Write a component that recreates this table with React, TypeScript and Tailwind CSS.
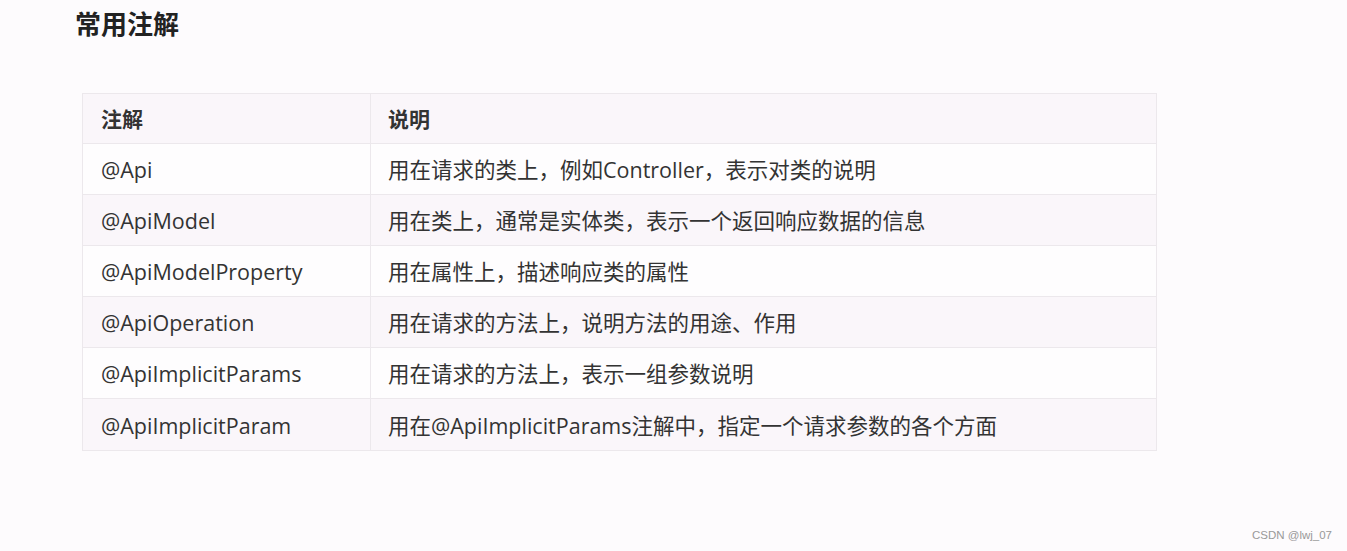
import React from "react";

const rows: [string, string][] = [
  ["@Api", "用在请求的类上，例如Controller，表示对类的说明"],
  ["@ApiModel", "用在类上，通常是实体类，表示一个返回响应数据的信息"],
  ["@ApiModelProperty", "用在属性上，描述响应类的属性"],
  ["@ApiOperation", "用在请求的方法上，说明方法的用途、作用"],
  ["@ApiImplicitParams", "用在请求的方法上，表示一组参数说明"],
  ["@ApiImplicitParam", "用在@ApiImplicitParams注解中，指定一个请求参数的各个方面"],
];

export default function App() {
  return (
    <div
      className="relative w-[1347px] h-[551px] bg-[#fdfbfd] overflow-hidden text-[#333]"
      style={{ fontFamily: '"Open Sans", "Noto Sans CJK SC", sans-serif' }}
    >
      <div className="pl-[75px] pt-[6px]">
        <h1 className="text-[26px] leading-[36px] font-bold text-[#222]">常用注解</h1>
      </div>
      <div className="ml-[82px] mt-[51px] w-[1075px] border border-[#ece8ec]">
        <div className="flex h-[50px] bg-[#faf6fa] border-b border-[#ece8ec] items-center">
          <div className="w-[288px] h-full flex items-center pl-[18px] pt-[2px] border-r border-[#ece8ec] font-bold text-[21px]">注解</div>
          <div className="flex-1 h-full flex items-center pl-[17px] pt-[2px] font-bold text-[21px]">说明</div>
        </div>
        {rows.map(([a, b], i) => (
          <div
            key={a}
            className={`flex h-[51px] items-center ${i % 2 === 1 ? "bg-[#faf6fa]" : "bg-[#fefdfe]"} ${i < rows.length - 1 ? "border-b border-[#ece8ec]" : ""}`}
          >
            <div className="w-[288px] h-full flex items-center pl-[18px] pt-[3px] border-r border-[#ece8ec] text-[21.5px]">{a}</div>
            <div className="flex-1 h-full flex items-center pl-[17px] pt-[3px] text-[21.5px]">{b}</div>
          </div>
        ))}
      </div>
      <div
        className="absolute right-[15px] bottom-[7px] text-[11.5px] text-[#999]"
        style={{ fontFamily: '"Liberation Sans", Arial, sans-serif' }}
      >
        CSDN @lwj_07
      </div>
    </div>
  );
}
